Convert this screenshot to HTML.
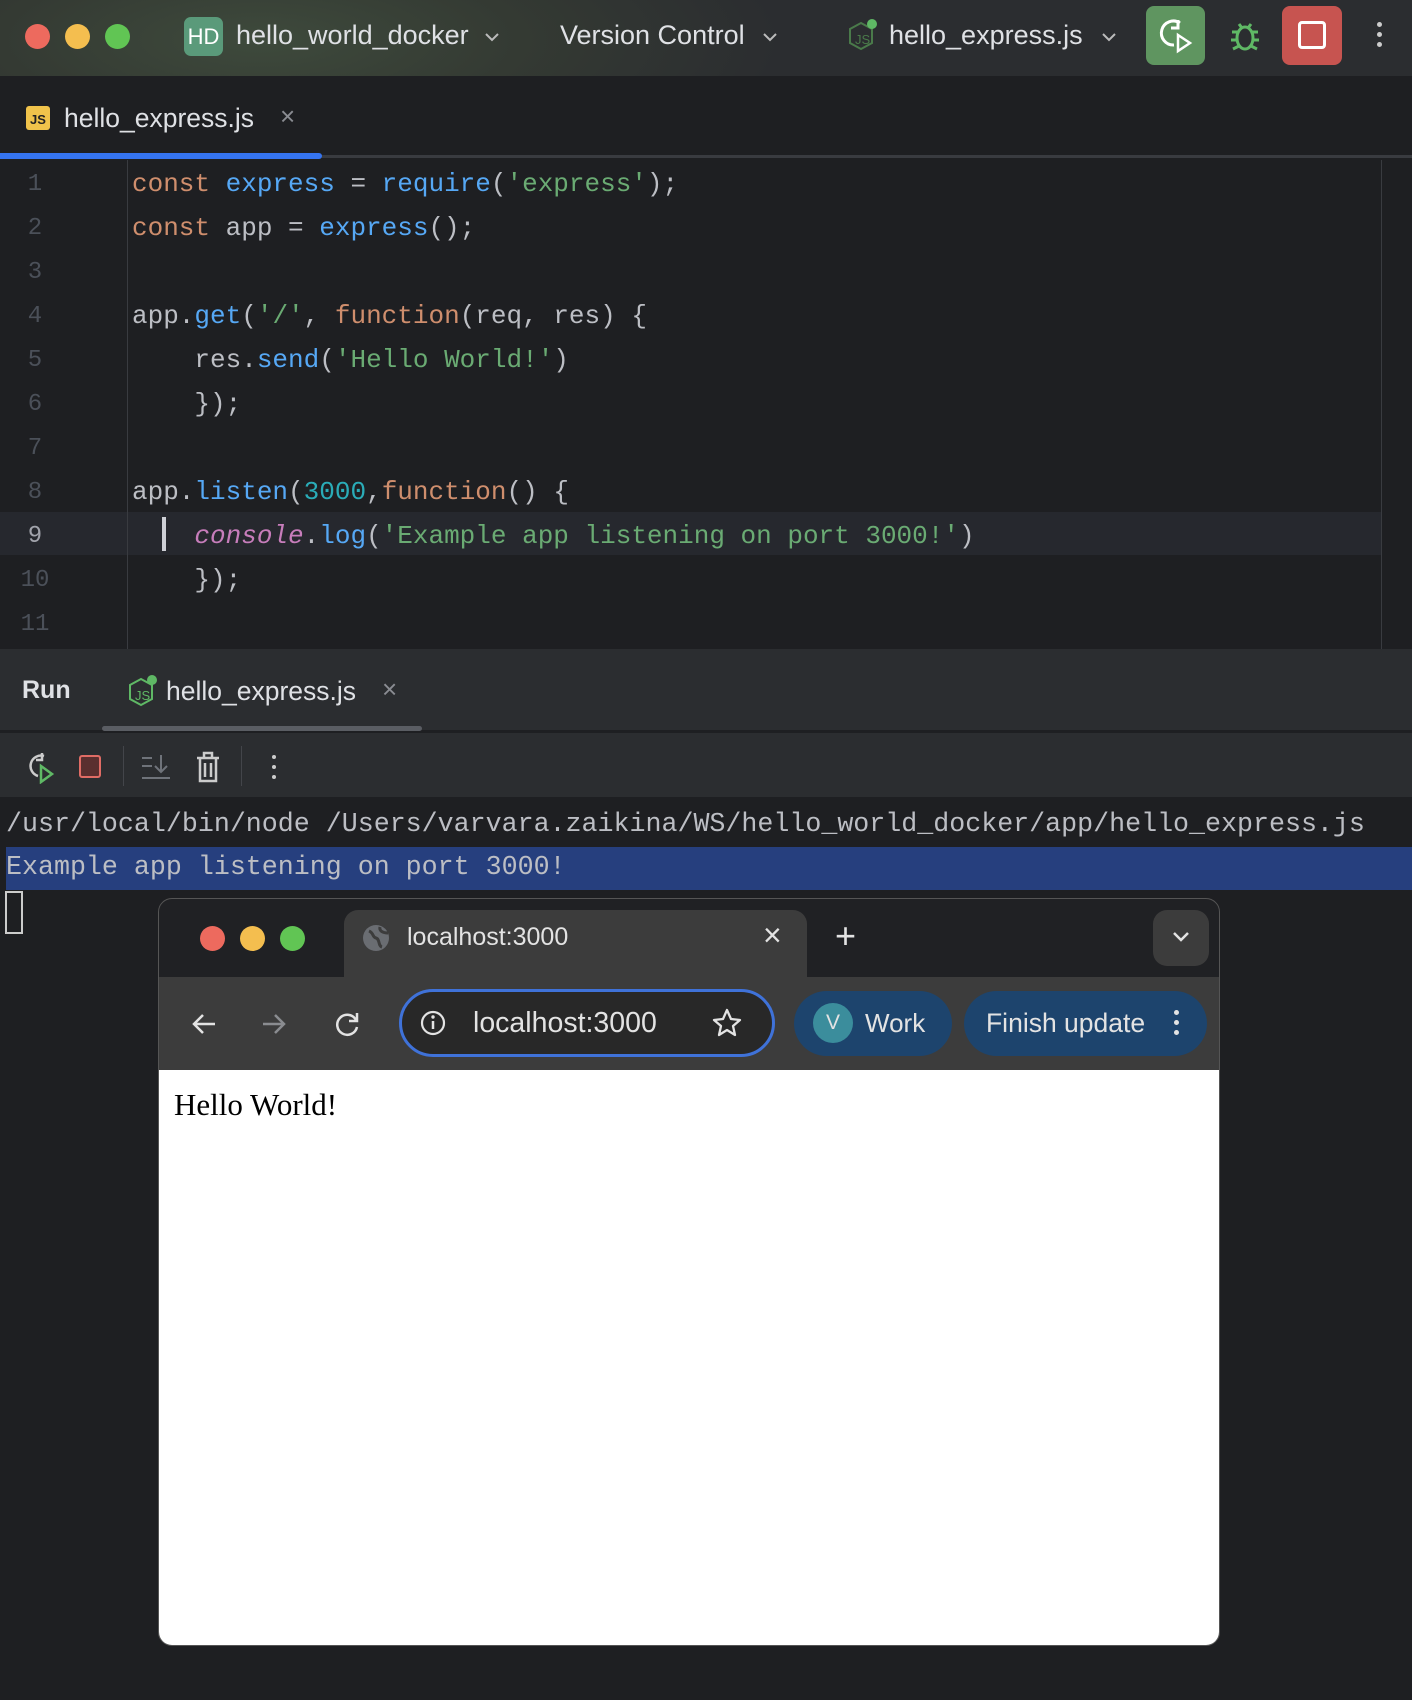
<!DOCTYPE html>
<html><head><meta charset="utf-8"><style>
*{margin:0;padding:0;box-sizing:border-box}
body{width:1412px;height:1700px;background:#1e1f22;position:relative;overflow:hidden;font-family:"Liberation Sans",sans-serif;color:#dfe1e5}
.a{position:absolute}
.mono{font-family:"Liberation Mono",monospace}
.title{left:0;top:0;width:1412px;height:76px;background:radial-gradient(ellipse 520px 160px at 260px 40px,#3e4a3c 0%,#343a33 50%,#2b2d30 100%)}
.dot{position:absolute;width:25px;height:25px;border-radius:50%}
.tt{font-size:27px;color:#dfe1e5;top:20px}
.code{font-size:26px;color:#bcbec4;white-space:pre;line-height:44px}
.ln{font-size:24px;color:#4b5059;width:40px;text-align:center;left:15px;line-height:44px}
.k{color:#cf8e6d}.f{color:#56a8f5}.s{color:#6aab73}.n{color:#2aacb8}.c{color:#c77dbb;font-style:italic}
</style></head><body>
<div class="a title"></div>
<div class="dot" style="left:25px;top:24px;background:#ed6a5e"></div>
<div class="dot" style="left:65px;top:24px;background:#f4be4f"></div>
<div class="dot" style="left:105px;top:24px;background:#61c554"></div>
<div class="a" style="left:184px;top:17px;width:39px;height:39px;border-radius:7px;background:#5a9a7a;color:#fff;font-size:22px;text-align:center;line-height:39px">HD</div>
<div class="a tt" style="left:236px">hello_world_docker</div>
<svg class="a" style="left:484px;top:29px" width="16" height="16"><path d="M2 5l6 6 6-6" stroke="#bbb" stroke-width="2" fill="none"/></svg>
<div class="a tt" style="left:560px">Version Control</div>
<svg class="a" style="left:762px;top:29px" width="16" height="16"><path d="M2 5l6 6 6-6" stroke="#bbb" stroke-width="2" fill="none"/></svg>
<svg class="a" style="left:846px;top:17px" width="34" height="40"><path d="M15 6l11 6v14l-11 6-11-6V12z" stroke="#4a7a4a" stroke-width="2" fill="none"/><text x="9" y="27" font-size="13" fill="#4a7a4a" font-family="Liberation Sans">JS</text><circle cx="26" cy="7" r="5" fill="#5fb865"/></svg>
<div class="a tt" style="left:889px">hello_express.js</div>
<svg class="a" style="left:1101px;top:29px" width="16" height="16"><path d="M2 5l6 6 6-6" stroke="#bbb" stroke-width="2" fill="none"/></svg>
<div class="a" style="left:1146px;top:6px;width:59px;height:59px;border-radius:8px;background:#5f9560"></div>
<svg class="a" style="left:1158px;top:17px" width="36" height="38"><path d="M22 6a12 12 0 1 0-6 22" stroke="#fff" stroke-width="3" fill="none"/><path d="M20 3v8h-7" stroke="#fff" stroke-width="3" fill="none"/><path d="M20 18l12 8-12 8z" stroke="#fff" stroke-width="2.5" fill="none"/></svg>
<svg class="a" style="left:1228px;top:18px" width="34" height="36"><ellipse cx="17" cy="20" rx="8" ry="11" stroke="#5fb865" stroke-width="3" fill="none"/><path d="M4 14h6M24 14h6M3 22h7M24 22h7M5 31l6-3M29 31l-6-3M11 6l3 4M23 6l-3 4" stroke="#5fb865" stroke-width="3"/></svg>
<div class="a" style="left:1282px;top:6px;width:60px;height:59px;border-radius:8px;background:#c75450"></div>
<div class="a" style="left:1298px;top:21px;width:28px;height:28px;border:3px solid #fff;border-radius:4px"></div>
<div class="a" style="left:1377px;top:22px;width:5px;height:5px;border-radius:50%;background:#ccc;box-shadow:0 10px 0 #ccc,0 20px 0 #ccc"></div>
<div class="a" style="left:0;top:76px;width:1412px;height:82px;background:#1e1f22;border-bottom:3px solid #393b40"></div>
<div class="a" style="left:26px;top:106px;width:24px;height:24px;background:#f0c34b;border-radius:3px;color:#222;font-size:13px;font-weight:bold;line-height:28px;text-align:center">JS</div>
<div class="a" style="left:64px;top:103px;font-size:26.5px;color:#dfe1e5">hello_express.js</div>
<div class="a" style="left:280px;top:101px;font-size:26px;color:#8a8c92">×</div>
<div class="a" style="left:0;top:153px;width:322px;height:6px;background:#3574f0;border-radius:0 3px 3px 0"></div>
<div class="a" style="left:0;top:512px;width:1381px;height:43px;background:#26282e"></div>
<div class="a" style="left:127px;top:160px;width:1px;height:489px;background:#393b40"></div>
<div class="a" style="left:1381px;top:160px;width:1px;height:489px;background:#393b40"></div>
<div class="a mono ln" style="top:163px">1<br>2<br>3<br>4<br>5<br>6<br>7<br>8<br><span style="color:#a1a3ab">9</span><br>10<br>11</div>
<div class="a mono code" style="left:132px;top:162px"><span class="k">const</span> <span class="f">express</span> = <span class="f">require</span>(<span class="s">'express'</span>);
<span class="k">const</span> app = <span class="f">express</span>();

app.<span class="f">get</span>(<span class="s">'/'</span>, <span class="k">function</span>(req, res) {
    res.<span class="f">send</span>(<span class="s">'Hello World!'</span>)
    });

app.<span class="f">listen</span>(<span class="n">3000</span>,<span class="k">function</span>() {
    <span class="c">console</span>.<span class="f">log</span>(<span class="s">'Example app listening on port 3000!'</span>)
    });
</div>
<div class="a" style="left:162px;top:517px;width:4px;height:34px;background:#ced0d6"></div>
<div class="a" style="left:0;top:649px;width:1412px;height:148px;background:#2b2d30"></div>
<div class="a" style="left:0;top:730px;width:1412px;height:3px;background:#1e1f22"></div>
<div class="a" style="left:22px;top:676px;font-size:25px;font-weight:bold;color:#dfe1e5">Run</div>
<svg class="a" style="left:126px;top:673px" width="34" height="38"><path d="M15 6l11 6v14l-11 6-11-6V12z" stroke="#5fb865" stroke-width="2" fill="none"/><text x="9" y="27" font-size="13" fill="#5fb865" font-family="Liberation Sans">JS</text><circle cx="26" cy="7" r="5" fill="#5fb865"/></svg>
<div class="a" style="left:166px;top:676px;font-size:26.5px;color:#dfe1e5">hello_express.js</div>
<div class="a" style="left:382px;top:674px;font-size:26px;color:#8a8c92">×</div>
<div class="a" style="left:102px;top:726px;width:320px;height:5px;background:#5a5d63;border-radius:3px"></div>
<svg class="a" style="left:24px;top:750px" width="32" height="34"><path d="M20 6a10 10 0 1 0-6 20" stroke="#ccc" stroke-width="2.5" fill="none"/><path d="M18 3v7h-6" stroke="#ccc" stroke-width="2.5" fill="none"/><path d="M17 16l11 8-11 8z" stroke="#5fb865" stroke-width="2.5" fill="none"/></svg>
<div class="a" style="left:79px;top:755px;width:22px;height:23px;border:2.5px solid #e06c65;background:#5a2f2f;border-radius:3px"></div>
<div class="a" style="left:123px;top:746px;width:1px;height:40px;background:#43454a"></div>
<svg class="a" style="left:140px;top:752px" width="32" height="30"><path d="M2 6h10M2 14h10M2 26h28M21 3v17M15 14l6 6 6-6" stroke="#6f737a" stroke-width="2" fill="none"/></svg>
<svg class="a" style="left:195px;top:750px" width="26" height="34"><path d="M2 8h22M9 8V3h8v5M5 8v23h16V8M10 13v14M16 13v14" stroke="#ccc" stroke-width="2.5" fill="none"/></svg>
<div class="a" style="left:241px;top:746px;width:1px;height:40px;background:#43454a"></div>
<div class="a" style="left:272px;top:755px;width:4px;height:4px;border-radius:50%;background:#ccc;box-shadow:0 10px 0 #ccc,0 20px 0 #ccc"></div>
<div class="a mono" style="left:6px;top:810px;font-size:26.65px;color:#bcbec4;white-space:pre">/usr/local/bin/node /Users/varvara.zaikina/WS/hello_world_docker/app/hello_express.js</div>
<div class="a" style="left:6px;top:847px;width:1406px;height:43px;background:#263f7e"></div>
<div class="a mono" style="left:6px;top:853px;font-size:26.65px;color:#bcbec4;white-space:pre">Example app listening on port 3000!</div>
<div class="a" style="left:5px;top:891px;width:18px;height:43px;border:2px solid #ccc"></div>
<div class="a" style="left:158px;top:898px;width:1062px;height:748px;border-radius:14px;background:#202124;overflow:hidden;border:1px solid #555">
  <div class="dot" style="left:41px;top:27px;background:#ed6a5e"></div>
  <div class="dot" style="left:81px;top:27px;background:#f4be4f"></div>
  <div class="dot" style="left:121px;top:27px;background:#61c554"></div>
  <div class="a" style="left:185px;top:11px;width:463px;height:70px;background:#3c3c3c;border-radius:14px 14px 0 0"></div>
  <div class="a" style="left:0;top:78px;width:1062px;height:93px;background:#3c3c3c"></div>
  <svg class="a" style="left:202px;top:24px" width="30" height="30"><circle cx="15" cy="15" r="13" fill="#6a6d72"/><path d="M8 8c5 2 3 6 7 7s2 8 6 9M19 4c-1 4 3 6 8 6" stroke="#3c3c3c" stroke-width="3" fill="none"/></svg>
  <div class="a" style="left:248px;top:24px;font-size:25px;color:#e3e3e3">localhost:3000</div>
  <div class="a" style="left:604px;top:18px;font-size:32px;color:#e3e3e3">×</div>
  <div class="a" style="left:676px;top:16px;font-size:36px;color:#e3e3e3">+</div>
  <div class="a" style="left:994px;top:11px;width:56px;height:56px;border-radius:14px;background:#3c3c3c"></div>
  <svg class="a" style="left:1012px;top:30px" width="20" height="16"><path d="M3 4l7 7 7-7" stroke="#e3e3e3" stroke-width="2.5" fill="none"/></svg>
  <svg class="a" style="left:30px;top:110px" width="30" height="30"><path d="M26 15H5M14 6l-9 9 9 9" stroke="#e3e3e3" stroke-width="2.5" fill="none"/></svg>
  <svg class="a" style="left:100px;top:110px" width="30" height="30"><path d="M4 15h21M16 6l9 9-9 9" stroke="#8a8c90" stroke-width="2.5" fill="none"/></svg>
  <svg class="a" style="left:173px;top:110px" width="30" height="30"><path d="M24 11a10 10 0 1 0 1 7" stroke="#e3e3e3" stroke-width="2.5" fill="none"/><path d="M25 4v8h-8" stroke="#e3e3e3" stroke-width="2.5" fill="none"/></svg>
  <div class="a" style="left:240px;top:90px;width:376px;height:68px;border:3px solid #3f72d9;border-radius:34px;background:#282828"></div>
  <svg class="a" style="left:260px;top:110px" width="28" height="28"><circle cx="14" cy="14" r="11" stroke="#e3e3e3" stroke-width="2.2" fill="none"/><path d="M14 12v8" stroke="#e3e3e3" stroke-width="2.5"/><circle cx="14" cy="8" r="1.7" fill="#e3e3e3"/></svg>
  <div class="a" style="left:314px;top:108px;font-size:28.5px;color:#e3e3e3">localhost:3000</div>
  <svg class="a" style="left:552px;top:108px" width="32" height="32"><path d="M16 3l4 9 9 1-7 6 2 9-8-5-8 5 2-9-7-6 9-1z" stroke="#e3e3e3" stroke-width="2.3" fill="none" stroke-linejoin="round"/></svg>
  <div class="a" style="left:635px;top:92px;width:158px;height:65px;border-radius:33px;background:#1d446d"></div>
  <div class="a" style="left:654px;top:104px;width:40px;height:40px;border-radius:50%;background:#3b8d9c;color:#e3e3e3;font-size:21px;text-align:center;line-height:40px">V</div>
  <div class="a" style="left:706px;top:109px;font-size:26px;color:#e3e3e3">Work</div>
  <div class="a" style="left:805px;top:92px;width:243px;height:65px;border-radius:33px;background:#1d446d"></div>
  <div class="a" style="left:827px;top:109px;font-size:26.5px;color:#e3e3e3">Finish update</div>
  <div class="a" style="left:1015px;top:111px;width:5px;height:5px;border-radius:50%;background:#e3e3e3;box-shadow:0 10px 0 #e3e3e3,0 20px 0 #e3e3e3"></div>
  <div class="a" style="left:0;top:171px;width:1062px;height:580px;background:#fff"></div>
  <div class="a" style="left:15px;top:188px;font-family:'Liberation Serif',serif;font-size:31px;color:#000">Hello World!</div>
</div>
</body></html>
